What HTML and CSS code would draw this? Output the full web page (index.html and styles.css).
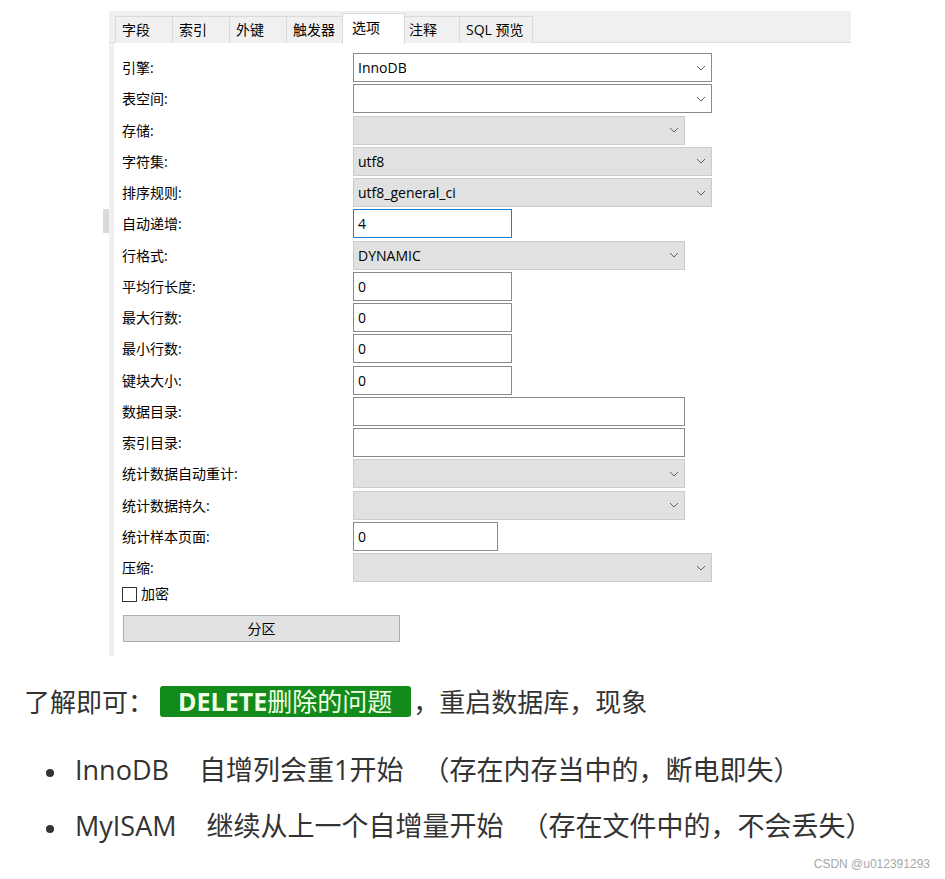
FILE: index.html
```html
<!DOCTYPE html>
<html lang="zh-CN">
<head>
<meta charset="utf-8">
<title>选项</title>
<link rel="stylesheet" href="styles.css">
</head>
<body>
<div class="window">
  <div class="splitter"></div>
  <div class="tabbar">
    <div class="tab">字段</div>
    <div class="tab">索引</div>
    <div class="tab">外键</div>
    <div class="tab">触发器</div>
    <div class="tab active">选项</div>
    <div class="tab">注释</div>
    <div class="tab">SQL 预览</div>
  </div>
  <div class="panel">
    <div class="form">
      <div class="lbl">引擎:</div>
      <div class="ctl full">InnoDB<svg class="chev" width="10" height="6" viewBox="0 0 10 6"><polyline points="1,1 5,5 9,1"/></svg></div>

      <div class="lbl">表空间:</div>
      <div class="ctl full"><svg class="chev" width="10" height="6" viewBox="0 0 10 6"><polyline points="1,1 5,5 9,1"/></svg></div>

      <div class="lbl">存储:</div>
      <div class="ctl mid ro"><svg class="chev" width="10" height="6" viewBox="0 0 10 6"><polyline points="1,1 5,5 9,1"/></svg></div>

      <div class="lbl">字符集:</div>
      <div class="ctl full ro">utf8<svg class="chev" width="10" height="6" viewBox="0 0 10 6"><polyline points="1,1 5,5 9,1"/></svg></div>

      <div class="lbl">排序规则:</div>
      <div class="ctl full ro">utf8_general_ci<svg class="chev" width="10" height="6" viewBox="0 0 10 6"><polyline points="1,1 5,5 9,1"/></svg></div>

      <div class="lbl">自动递增:</div>
      <div class="ctl small focus">4</div>

      <div class="lbl">行格式:</div>
      <div class="ctl mid ro">DYNAMIC<svg class="chev" width="10" height="6" viewBox="0 0 10 6"><polyline points="1,1 5,5 9,1"/></svg></div>

      <div class="lbl">平均行长度:</div>
      <div class="ctl small">0</div>

      <div class="lbl">最大行数:</div>
      <div class="ctl small">0</div>

      <div class="lbl">最小行数:</div>
      <div class="ctl small">0</div>

      <div class="lbl">键块大小:</div>
      <div class="ctl small">0</div>

      <div class="lbl">数据目录:</div>
      <div class="ctl mid"></div>

      <div class="lbl">索引目录:</div>
      <div class="ctl mid"></div>

      <div class="lbl">统计数据自动重计:</div>
      <div class="ctl mid ro"><svg class="chev" width="10" height="6" viewBox="0 0 10 6"><polyline points="1,1 5,5 9,1"/></svg></div>

      <div class="lbl">统计数据持久:</div>
      <div class="ctl mid ro"><svg class="chev" width="10" height="6" viewBox="0 0 10 6"><polyline points="1,1 5,5 9,1"/></svg></div>

      <div class="lbl">统计样本页面:</div>
      <div class="ctl sample">0</div>

      <div class="lbl">压缩:</div>
      <div class="ctl full ro"><svg class="chev" width="10" height="6" viewBox="0 0 10 6"><polyline points="1,1 5,5 9,1"/></svg></div>
    </div>
    <div class="check-row"><span class="checkbox"></span>加密</div>
    <div class="btn">分区</div>
  </div>
</div>

<div class="article">
  <p class="lead">了解即可：<span class="badge"><b>DELETE</b>删除的问题</span>，重启数据库，现象</p>
  <ul class="points">
    <li>InnoDB<span class="gap"></span>自增列会重1开始<span class="gap2"></span>（存在内存当中的，断电即失）</li>
    <li>MyISAM<span class="gap"></span>继续从上一个自增量开始<span class="gap3"></span>（存在文件中的，不会丢失）</li>
  </ul>
</div>

<div class="watermark">CSDN @u012391293</div>
</body>
</html>
```

FILE: styles.css
```css
html, body {
  margin: 0;
  padding: 0;
  background: #ffffff;
}

body {
  position: relative;
  width: 945px;
  height: 879px;
  overflow: hidden;
  font-family: "Open Sans", "Noto Sans CJK SC", sans-serif;
  color: #000;
}

.window {
  position: relative;
  margin: 11px 0 0 109px;
  width: 742px;
}

.splitter {
  position: absolute;
  left: -6px;
  top: 198px;
  width: 6px;
  height: 24px;
  background: #dadada;
}

.tabbar {
  box-sizing: border-box;
  height: 32px;
  background: #f0f0f0;
  border-bottom: 1px solid #dcdcdc;
  padding-left: 6px;
  display: flex;
  align-items: flex-start;
}

.tab {
  box-sizing: border-box;
  min-width: 58px;
  height: 27px;
  margin-top: 5px;
  padding: 0 8px 0 6px;
  border: 1px solid #dadada;
  border-bottom: none;
  background: #f0f0f0;
  font-size: 14px;
  line-height: 25px;
  color: #000;
  white-space: nowrap;
}

.tab + .tab {
  margin-left: -1px;
}

.tab.active {
  position: relative;
  z-index: 1;
  background: #ffffff;
  height: 31px;
  margin-top: 2px;
  margin-left: -2px;
  margin-right: -2px;
  min-width: 63px;
  padding-left: 9px;
  line-height: 27px;
}

.panel {
  border-left: 5px solid #f0f0f0;
  padding: 10px 0 14px 8px;
  background: #fff;
}

.form {
  display: grid;
  grid-template-columns: 231px auto;
  grid-auto-rows: 29px;
  row-gap: 2.25px;
  align-items: center;
}

.lbl {
  font-size: 14px;
  line-height: 29px;
  color: #000;
  white-space: nowrap;
}

.ctl {
  box-sizing: border-box;
  height: 29px;
  border: 1px solid #8a8a8a;
  background: #ffffff;
  display: flex;
  align-items: center;
  padding: 0 5px 0 4px;
  font-size: 14px;
  line-height: 27px;
  color: #000;
}

.full { width: 359px; }
.mid { width: 332px; }
.small { width: 159px; }
.sample { width: 145px; }

.ro {
  background: #e1e1e1;
  border-color: #cccccc;
}

.ctl.focus {
  border-color: #1a7fd4;
}

.chev {
  margin-left: auto;
  fill: none;
  stroke: #606060;
  stroke-width: 1;
}

.check-row {
  display: flex;
  align-items: center;
  height: 20px;
  margin-top: 2px;
  font-size: 14px;
  line-height: 20px;
}

.checkbox {
  box-sizing: border-box;
  width: 15px;
  height: 15px;
  border: 1px solid #333;
  background: #fff;
  margin-right: 4px;
}

.btn {
  box-sizing: border-box;
  width: 277px;
  height: 27px;
  margin: 11px 0 0 1px;
  background: #e1e1e1;
  border: 1px solid #adadad;
  font-size: 14px;
  line-height: 25px;
  text-align: center;
}

.article {
  color: #333;
  font-size: 26px;
}

.lead {
  margin: 26px 0 0 0;
  padding-left: 24px;
  height: 40px;
  line-height: 40px;
  white-space: nowrap;
}

.badge {
  display: inline-block;
  vertical-align: top;
  margin: 4px 2px 0 6px;
  height: 31px;
  line-height: 31px;
  padding: 0 19px 0 18px;
  background: #138a1c;
  border-radius: 3px;
  color: #f0ffe2;
  font-size: 25px;
}

.badge b {
  font-weight: 700;
}

.points {
  list-style: none;
  margin: 20px 0 0 0;
  padding: 0 0 0 46px;
  font-size: 27px;
}

.points li {
  height: 56px;
  line-height: 56px;
  white-space: nowrap;
}

.points li::before {
  content: "";
  display: inline-block;
  width: 8px;
  height: 8px;
  border-radius: 50%;
  background: #333;
  margin-right: 21px;
  vertical-align: middle;
}

.gap {
  display: inline-block;
  width: 30px;
}

.gap2 {
  display: inline-block;
  width: 19px;
}

.gap3 {
  display: inline-block;
  width: 18px;
}

.watermark {
  position: absolute;
  right: 15px;
  top: 857px;
  font-family: "Liberation Sans", sans-serif;
  font-size: 12px;
  color: #a8a8a8;
}
```
